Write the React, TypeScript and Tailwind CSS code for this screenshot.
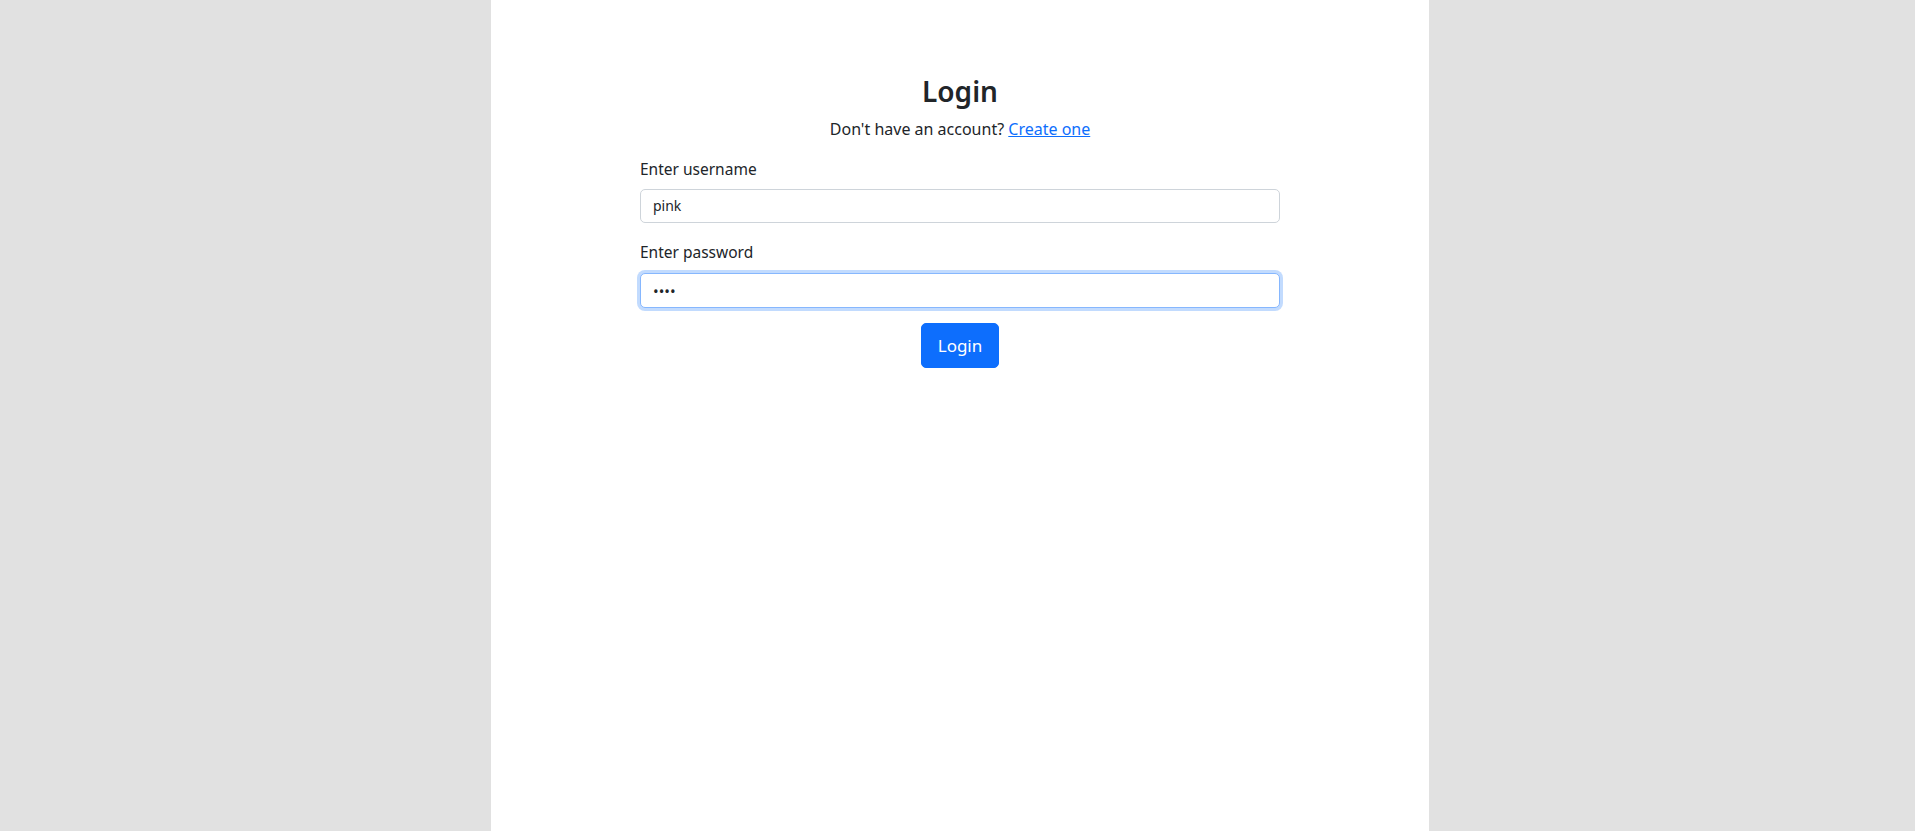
import { useState } from 'react'

export default function App() {
  const [username, setUsername] = useState('pink')
  const [password, setPassword] = useState('1234')

  return (
    <div className="min-h-screen bg-[#e1e1e1] pl-[5px] font-['Noto_Sans',sans-serif] text-[#212529]">
      <div className="mx-auto min-h-screen w-[938px] bg-white pt-[75px]">
        <div className="mx-auto w-[640px]">
          <h2 className="text-center text-[28px] leading-[1.2] font-semibold">Login</h2>
          <p className="mt-[8px] text-center text-[16px] leading-[1.5]">
            Don't have an account?{' '}
            <a href="#" className="text-[#0d6efd] underline">
              Create one
            </a>
          </p>

          <form className="mt-[17px]" onSubmit={(e) => e.preventDefault()}>
            <label htmlFor="username" className="block text-[15.5px] leading-[1.5]">
              Enter username
            </label>
            <input
              id="username"
              type="text"
              value={username}
              onChange={(e) => setUsername(e.target.value)}
              className="mt-[8px] block h-[34px] w-full rounded-[5px] border border-[#ced4da] bg-white px-[12px] text-[14px] text-[#212529] outline-none"
            />

            <label htmlFor="password" className="mt-[18px] block text-[15.5px] leading-[1.5]">
              Enter password
            </label>
            <input
              id="password"
              type="password"
              value={password}
              onChange={(e) => setPassword(e.target.value)}
              className="mt-[9px] block h-[35px] w-full rounded-[5px] border border-[#86b7fe] bg-white px-[12px] text-[15px] text-[#212529] shadow-[0_0_0_3px_rgba(13,110,253,0.25)] outline-none"
            />

            <div className="mt-[15px] flex justify-center">
              <button
                type="submit"
                className="h-[45px] rounded-[5px] border border-[#0d6efd] bg-[#0d6efd] px-4 text-[17px] text-white"
              >
                Login
              </button>
            </div>
          </form>
        </div>
      </div>
    </div>
  )
}
